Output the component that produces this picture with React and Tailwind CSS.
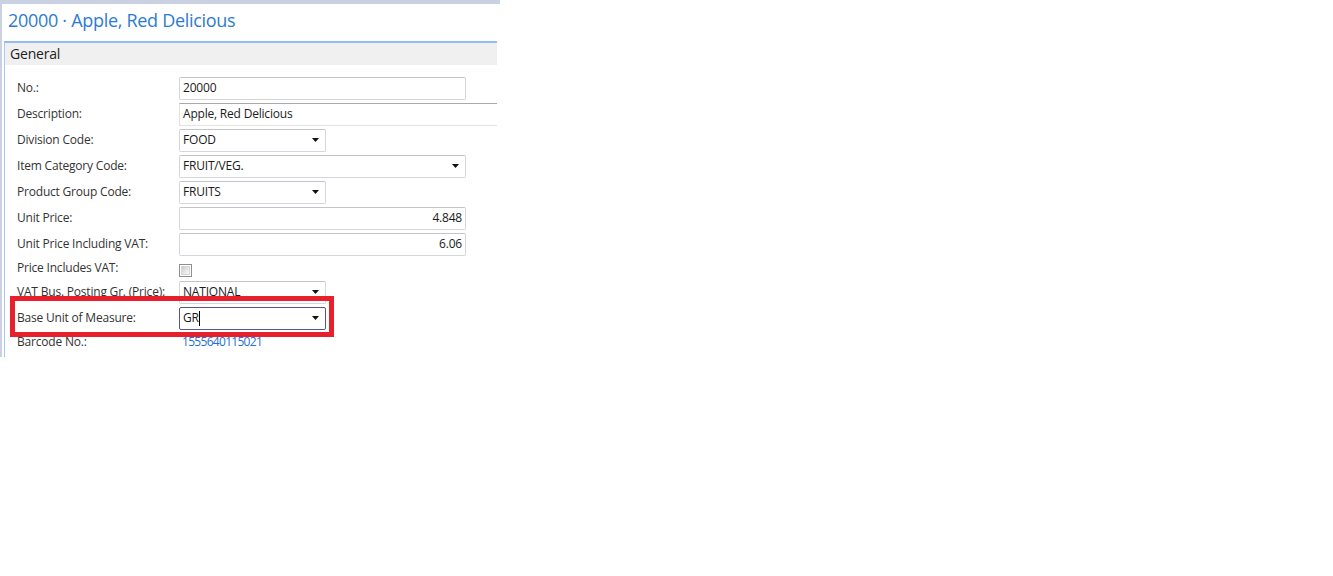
import React from "react";

function Row({ label, children, h = "h-[22px]" }) {
  return (
    <div className={`flex items-center ${h}`}>
      <div className="w-[162px] shrink-0 text-[12px] tracking-[-0.2px] text-[#333] whitespace-nowrap">{label}</div>
      {children}
    </div>
  );
}

function TextBox({ value, w, right, desc }) {
  return (
    <div
      className={`flex items-center h-[23px] px-[3px] text-[12px] tracking-[-0.2px] text-[#1b1b1b] border rounded-[2px] ${w} ${
        right ? "justify-end" : ""
      } ${
        desc
          ? "border-[#e3e3e3] border-t-[#a9a9a9] border-r-0 rounded-none"
          : "border-[#d4d6dc] border-t-[#c2c4ca]"
      }`}
    >
      <span className="whitespace-nowrap">{value}</span>
    </div>
  );
}

function Combo({ value, w, focused, caret }) {
  return (
    <div
      className={`flex items-center justify-between h-[23px] pl-[3px] pr-[5px] text-[12px] tracking-[-0.2px] text-[#1b1b1b] border rounded-[2px] ${w} ${
        focused ? "border-[#55558a]" : "border-[#d4d6dc] border-t-[#c2c4ca]"
      }`}
    >
      <span className="flex items-center whitespace-nowrap">
        {value}
        {caret && <span className="w-px h-[15px] bg-black" />}
      </span>
      <svg width="8" height="5" viewBox="0 0 8 5" className="mt-[1px]">
        <path d="M0 0 H7 L3.5 4 Z" fill="#111" />
      </svg>
    </div>
  );
}

export default function App() {
  return (
    <div className="relative w-[1333px] h-[576px] bg-white font-['Open_Sans',sans-serif] overflow-hidden">
      <div className="w-[500px] h-[4px] bg-[#c9d1e2]" />
      <div className="flex w-[500px]">
        <div className="w-[2px] h-[353px] bg-[#c9d1e2]" />
        <div className="flex-1 flex flex-col">
          <div className="h-[37px] pl-[6px] pt-[3px] text-[18px] tracking-[-0.3px] leading-[26px] text-[#2c7bd2] whitespace-nowrap">
            20000 · Apple, Red Delicious
          </div>
          <div className="ml-[2px] w-[493px] h-[316px] border-l border-l-[#a9c8ef] border-t-2 border-t-[#95bcf0] overflow-hidden">
            <div className="h-[22px] bg-[#f0f0f0] pl-[5px] text-[14px] tracking-[-0.2px] leading-[22px] text-[#222]">
              General
            </div>
            <div className="pl-[12px] pt-[12px] flex flex-col gap-[4px]">
              <Row label="No.:">
                <TextBox value="20000" w="w-[287px]" />
              </Row>
              <Row label="Description:">
                <TextBox value="Apple, Red Delicious" w="w-[340px]" desc />
              </Row>
              <Row label="Division Code:">
                <Combo value="FOOD" w="w-[147px]" />
              </Row>
              <Row label="Item Category Code:">
                <Combo value="FRUIT/VEG." w="w-[287px]" />
              </Row>
              <Row label="Product Group Code:">
                <Combo value="FRUITS" w="w-[147px]" />
              </Row>
              <Row label="Unit Price:">
                <TextBox value="4.848" w="w-[287px]" right />
              </Row>
              <Row label="Unit Price Including VAT:">
                <TextBox value="6.06" w="w-[287px]" right />
              </Row>
              <Row label="Price Includes VAT:" h="h-[18px]">
                <div className="w-[13px] h-[13px] mt-[5px] border border-[#8e8f8f] bg-white p-px">
                  <div className="w-full h-full bg-gradient-to-br from-[#c9cacb] via-[#e4e4e4] to-[#fafafa] border border-[#d6d6d6]" />
                </div>
              </Row>
              <Row label="VAT Bus. Posting Gr. (Price):">
                <Combo value="NATIONAL" w="w-[147px]" />
              </Row>
              <Row label="Base Unit of Measure:">
                <Combo value="GR" w="w-[147px]" focused caret />
              </Row>
              <Row label="Barcode No.:" h="h-[18px]">
                <span className="text-[12px] tracking-[-0.7px] text-[#1f6fd6] px-[3px]">1555640115021</span>
              </Row>
            </div>
          </div>
        </div>
      </div>
      <div className="absolute left-[10px] top-[296px] w-[324px] h-[41px] border-[5px] border-[#e8202b]" />
    </div>
  );
}
